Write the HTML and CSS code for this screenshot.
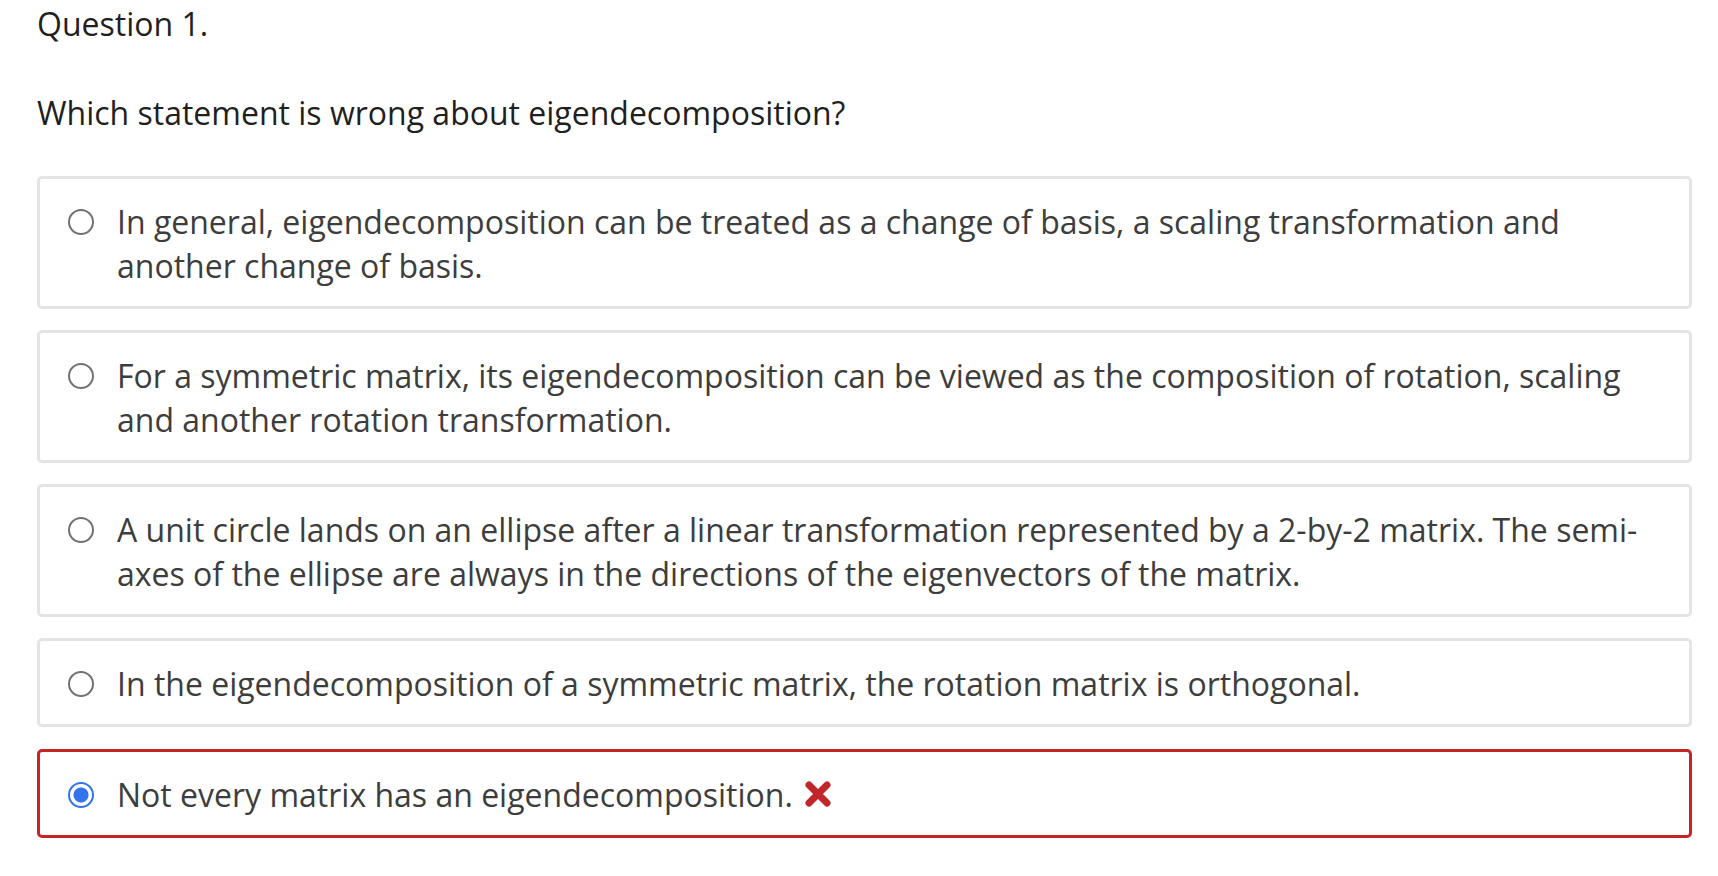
FILE: index.html
```html
<!DOCTYPE html>
<html lang="en">
<head>
<meta charset="utf-8">
<title>Question 1</title>
<link rel="stylesheet" href="styles.css">
</head>
<body>
<div class="quiz">
  <div class="qnum">Question 1.</div>
  <div class="prompt">Which statement is wrong about eigendecomposition?</div>
  <div class="options">
    <label class="option">
      <span class="radio"></span>
      <span class="text">In general, eigendecomposition can be treated as a change of basis, a scaling transformation and another change of basis.</span>
    </label>
    <label class="option">
      <span class="radio"></span>
      <span class="text">For a symmetric matrix, its eigendecomposition can be viewed as the composition of rotation, scaling and another rotation transformation.</span>
    </label>
    <label class="option">
      <span class="radio"></span>
      <span class="text">A unit circle lands on an ellipse after a linear transformation represented by a 2-by-2 matrix. The semi-axes of the ellipse are always in the directions of the eigenvectors of the matrix.</span>
    </label>
    <label class="option">
      <span class="radio"></span>
      <span class="text">In the eigendecomposition of a symmetric matrix, the rotation matrix is orthogonal.</span>
    </label>
    <label class="option option-wrong">
      <span class="radio radio-checked"></span>
      <span class="text">Not every matrix has an eigendecomposition.<svg class="wrong-icon" viewBox="0 0 28 28" aria-hidden="true"><path d="M5 5 L23 23 M23 5 L5 23" stroke="currentColor" stroke-width="7" stroke-linecap="round"/></svg></span>
    </label>
  </div>
</div>
</body>
</html>
```

FILE: styles.css
```css
html, body {
  margin: 0;
  background: #ffffff;
}

body {
  font-family: "Open Sans", "DejaVu Sans", sans-serif;
  font-size: 32px;
  line-height: 43px;
  color: #1f1f1f;
}

.quiz {
  padding: 2px 26px 20px 37px;
}

.qnum {
  margin: 0;
}

.prompt {
  margin-top: 46px;
}

.options {
  margin-top: 42px;
  display: flex;
  flex-direction: column;
  gap: 21.5px;
}

.option {
  display: flex;
  align-items: flex-start;
  border: 3px solid #e4e4e4;
  border-radius: 5px;
  padding: 21px 30px 18.5px 28px;
  line-height: 43.5px;
  color: #3d3d3d;
}

.option-wrong {
  border-color: #c42628;
}

.radio {
  flex: none;
  box-sizing: border-box;
  width: 26px;
  height: 26px;
  margin-top: 9px;
  margin-right: 23px;
  border: 2px solid #727272;
  border-radius: 50%;
  background: #ffffff;
}

.radio-checked {
  border: 2.5px solid #3273ee;
  background: radial-gradient(circle, #3273ee 0 7px, #ffffff 8px);
}

.text {
  flex: 1;
}

.wrong-icon {
  display: inline-block;
  width: 28px;
  height: 28px;
  margin-left: 11px;
  vertical-align: -1px;
  color: #c1262b;
}
```
